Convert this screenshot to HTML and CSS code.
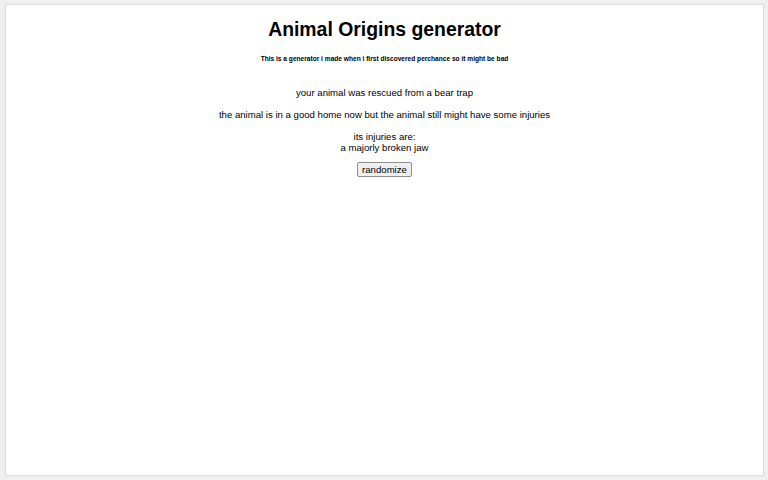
FILE: index.html
```html
<!DOCTYPE html>
<html lang="en">
<head>
    <meta charset="UTF-8">
    <meta name="viewport" content="width=device-width, initial-scale=1.0">
    <title>Animal Origins generator</title>
    <link rel="stylesheet" href="styles.css">
</head>
<body>
    <div class="page">
        <h1>Animal Origins generator</h1>
        <h2>This is a generator i made when i first discovered perchance so it might be bad</h2>

        <div class="output">
            <p>your animal was rescued from a bear trap</p>
            <p>the animal is in a good home now but the animal still might have some injuries</p>
            <p>its injuries are:<br>a majorly broken jaw</p>
        </div>

        <button class="randomize">randomize</button>
    </div>
</body>
</html>
```

FILE: styles.css
```css
html,
body {
    height: 100%;
}

body {
    margin: 0;
    padding: 4px 4px 4px 5px;
    box-sizing: border-box;
    background-color: #efefef;
    font-family: 'Liberation Sans', Arial, sans-serif;
    color: #000;
}

.page {
    height: 100%;
    box-sizing: border-box;
    background-color: #fff;
    border: 1px solid #dcdcdc;
    text-align: center;
    padding-top: 13px;
}

h1 {
    margin: 0;
    font-size: 19.4px;
    font-weight: bold;
    line-height: 22px;
}

h2 {
    margin: 15px 0 0;
    font-size: 6.6px;
    font-weight: bold;
    line-height: 8px;
}

.output {
    margin-top: 24px;
    font-size: 9.6px;
    line-height: 11px;
}

.output p {
    margin: 0 0 11px;
}

.output p:last-child {
    margin-bottom: 9px;
}

.randomize {
    display: block;
    margin: 0 auto;
    font-family: 'Liberation Sans', Arial, sans-serif;
    font-size: 9.6px;
    line-height: 11px;
    padding: 1px 4px;
    background-color: #efefef;
    border: 1px solid #8f8f8f;
    border-radius: 2px;
    color: #000;
}
```
